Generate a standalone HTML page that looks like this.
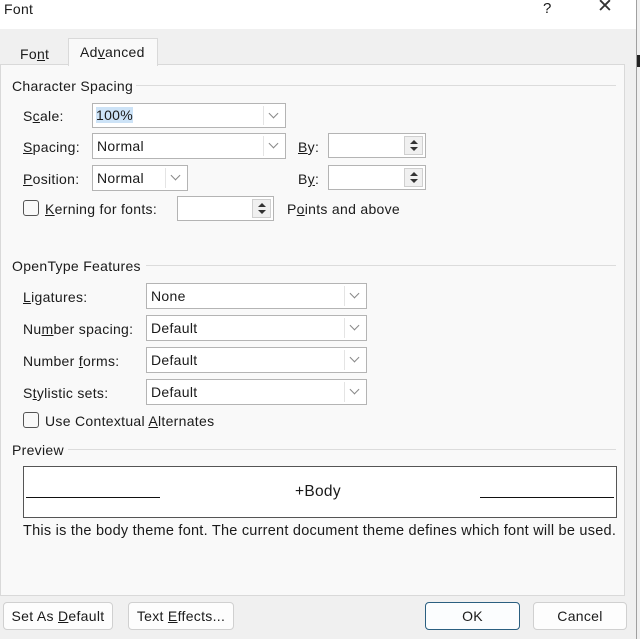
<!DOCTYPE html>
<html><head><meta charset="utf-8"><style>
*{box-sizing:border-box}
body{margin:0;width:640px;height:639px;overflow:hidden;background:#f0f0f0;font-family:"Liberation Sans",sans-serif;font-size:14px;letter-spacing:.3px;color:#1a1a1a;position:relative}
.a{position:absolute}
.t{position:absolute;white-space:nowrap;line-height:16px}
.box{position:absolute;background:#fff;border:1px solid #b4b4b4}
.dd{position:absolute;top:2px;bottom:2px;right:2px;width:20px;border-left:1px solid #e4e4e4}
.dd:after{content:"";position:absolute;left:6px;top:4px;width:6px;height:6px;border-right:1px solid #888;border-bottom:1px solid #888;transform:rotate(45deg)}
.sp{position:absolute;top:2px;bottom:2px;right:2px;width:19px;background:#f0f0f0;border:1px solid #cfcfcf}
.sp:before{content:"";position:absolute;left:5px;top:3px;border:4px solid transparent;border-bottom:4px solid #333;border-top:0}
.sp:after{content:"";position:absolute;left:5px;bottom:3px;border:4px solid transparent;border-top:4px solid #333;border-bottom:0}
.cb{position:absolute;width:16px;height:16px;border:1px solid #555;border-radius:3px;background:#f9f9f9}
.btn{position:absolute;height:28px;background:#fdfdfd;border:1px solid #d0d0d0;border-radius:4px;text-align:center;line-height:26px}
.hl{position:absolute;height:1px;background:#dcdcdc}
u{text-decoration:underline}
</style></head><body>
<div class="a" style="left:0;top:0;width:637px;height:29px;background:#fff"></div>
<div class="t" style="left:4px;top:1px;font-size:14px">Font</div>
<div class="t" style="left:543px;top:1px;font-size:15px">?</div>
<div class="t" style="left:597px;top:-1px;font-size:19px;color:#333">✕</div>
<div class="a" style="left:636px;top:0;width:1px;height:639px;background:#a0a0a0"></div>
<div class="a" style="left:637px;top:55px;width:3px;height:12px;background:#222"></div>
<div class="a" style="left:0;top:64px;width:625px;height:532px;background:#f9f9f9;border:1px solid #d9d9d9"></div>
<div class="a" style="left:68px;top:38px;width:90px;height:28px;background:#f9f9f9;border:1px solid #d9d9d9;border-bottom:none"></div>
<div class="t" style="left:20px;top:46px">Fo<u>n</u>t</div>
<div class="t" style="left:80px;top:44px">Ad<u>v</u>anced</div>
<div class="t" style="left:12px;top:78px">Character Spacing</div>
<div class="hl" style="left:136px;top:85px;width:480px"></div>
<div class="t" style="left:23px;top:108px">S<u>c</u>ale:</div>
<div class="box" style="left:92px;top:103px;width:194px;height:25px"><span style="position:absolute;left:3px;top:3px;background:#cde3f7;line-height:16px">100%</span><div class="dd"></div></div>
<div class="t" style="left:23px;top:139px"><u>S</u>pacing:</div>
<div class="box" style="left:92px;top:133px;width:194px;height:26px"><span class="t" style="left:4px;top:4px">Normal</span><div class="dd"></div></div>
<div class="t" style="left:298px;top:139px"><u>B</u>y:</div>
<div class="box" style="left:328px;top:133px;width:98px;height:25px"><div class="sp"></div></div>
<div class="t" style="left:23px;top:171px"><u>P</u>osition:</div>
<div class="box" style="left:92px;top:165px;width:96px;height:26px"><span class="t" style="left:4px;top:4px">Normal</span><div class="dd"></div></div>
<div class="t" style="left:298px;top:171px">B<u>y</u>:</div>
<div class="box" style="left:328px;top:165px;width:98px;height:25px"><div class="sp"></div></div>
<div class="cb" style="left:23px;top:200px"></div>
<div class="t" style="left:45px;top:201px"><u>K</u>erning for fonts:</div>
<div class="box" style="left:177px;top:196px;width:97px;height:25px"><div class="sp"></div></div>
<div class="t" style="left:287px;top:201px">P<u>o</u>ints and above</div>
<div class="t" style="left:12px;top:258px">OpenType Features</div>
<div class="hl" style="left:146px;top:265px;width:470px"></div>
<div class="t" style="left:23px;top:289px"><u>L</u>igatures:</div>
<div class="box" style="left:146px;top:283px;width:221px;height:26px"><span class="t" style="left:4px;top:4px">None</span><div class="dd"></div></div>
<div class="t" style="left:23px;top:321px">Nu<u>m</u>ber spacing:</div>
<div class="box" style="left:146px;top:315px;width:221px;height:26px"><span class="t" style="left:4px;top:4px">Default</span><div class="dd"></div></div>
<div class="t" style="left:23px;top:353px">Number <u>f</u>orms:</div>
<div class="box" style="left:146px;top:347px;width:221px;height:26px"><span class="t" style="left:4px;top:4px">Default</span><div class="dd"></div></div>
<div class="t" style="left:23px;top:385px">S<u>t</u>ylistic sets:</div>
<div class="box" style="left:146px;top:379px;width:221px;height:26px"><span class="t" style="left:4px;top:4px">Default</span><div class="dd"></div></div>
<div class="cb" style="left:23px;top:412px"></div>
<div class="t" style="left:45px;top:413px">Use Contextual <u>A</u>lternates</div>
<div class="t" style="left:12px;top:442px">Preview</div>
<div class="hl" style="left:68px;top:449px;width:548px"></div>
<div class="a" style="left:23px;top:466px;width:594px;height:52px;background:#fff;border:1px solid #555"></div>
<div class="a" style="left:26px;top:497px;width:134px;height:1px;background:#111"></div>
<div class="a" style="left:480px;top:497px;width:134px;height:1px;background:#111"></div>
<div class="t" style="left:295px;top:484px;font-size:15.5px">+Body</div>
<div class="t" style="left:23px;top:523px;font-size:14.5px;letter-spacing:.24px">This is the body theme font. The current document theme defines which font will be used.</div>
<div class="btn" style="left:3px;top:602px;width:110px">Set As <u>D</u>efault</div>
<div class="btn" style="left:128px;top:602px;width:106px">Text <u>E</u>ffects...</div>
<div class="btn" style="left:425px;top:602px;width:95px;border:1px solid #2a5f80;background:#fbfdfe">OK</div>
<div class="btn" style="left:533px;top:602px;width:94px">Cancel</div>
</body></html>
